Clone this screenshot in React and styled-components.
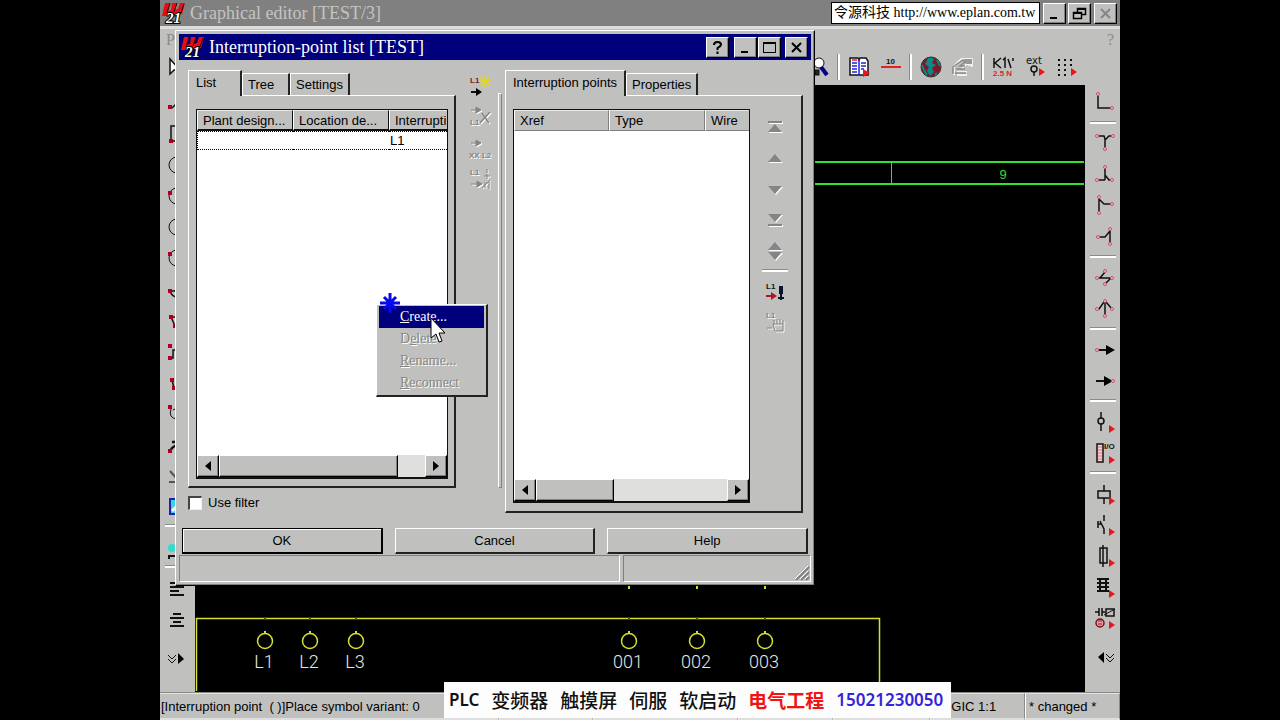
import React, { useState } from 'react'
import styled, { createGlobalStyle, css } from 'styled-components'

const face = '#c0c1bf'
const sans = '"Liberation Sans", Arial, sans-serif'
const serif = '"Liberation Serif", "Noto Sans CJK TC", serif'

const raised = css`
  border: 1px solid;
  border-color: #fff #000 #000 #fff;
  box-shadow: inset -1px -1px 0 #808080;
`

/* ---------- icons ---------- */

const Node = ({ x, y }) => (
  <circle cx={x} cy={y} r="1.5" fill="#f0c0c8" stroke="#c8506a" />
)
const Dot = ({ x, y }) => <rect x={x - 2} y={y - 2} width="4" height="4" fill="#a8001c" stroke="none" />
const Flag = ({ y = 15 }) => <path d={`M18 ${y}l6 4l-6 4z`} fill="#e8141e" stroke="none" />

function Icon({ children, size = 24, ...rest }) {
  return (
    <svg width={size} height={size} viewBox="0 0 24 24" fill="none" stroke="#111" aria-hidden="true" {...rest}>
      {children}
    </svg>
  )
}

// disabled look: white copy one pixel down-right, grey on top
function Etched({ children }) {
  return (
    <Icon stroke="none">
      <g transform="translate(1 1)" fill="#fff" stroke="#fff">{children}</g>
      <g fill="#858585" stroke="#858585">{children}</g>
    </Icon>
  )
}

const Tiny = ({ x, y, children, fill }) => (
  <text x={x} y={y} fontSize="8" fontFamily="Liberation Sans" fontWeight="700" stroke="none" fill={fill}>{children}</text>
)

const AppLogo = () => (
  <svg width="25" height="24" viewBox="0 0 25 24" aria-hidden="true">
    <path d="M4 2h5l-2 8l3-1l1-7h5l-2 7l3-1l2-6h5l-3 11l-5 2l1-4l-5 3l-1-2l-5 3H1z" fill="#e80c12" />
    <path d="M9 2l-3 10M16 2l-3 9M23 3l-3 9" stroke="#300" strokeWidth="1" fill="none" />
    <text x="5" y="22" fontSize="15" fontWeight="700" fontStyle="italic" fontFamily="Liberation Serif"
      fill="#fff" stroke="#000" strokeWidth="2" paintOrder="stroke">21</text>
  </svg>
)

const drawTools = [
  <><path d="M6 17L14 9" strokeWidth="1.5" /><Dot x={4} y={16} /></>,
  <><path d="M5 19V4H20V19z" strokeWidth="1.5" /><Dot x={5} y={19} /></>,
  <circle cx="11" cy="12" r="8" />,
  <><circle cx="11" cy="12" r="8" /><Dot x={4} y={9} /></>,
  <circle cx="11" cy="12" r="8" />,
  <><circle cx="11" cy="12" r="8" /><Dot x={4} y={8} /></>,
  <><path d="M4 14H20M4 14Q6 21 14 20" strokeWidth="1.5" /><Dot x={4} y={14} /></>,
  <><path d="M5 9L9 18M5 9H14" strokeWidth="1.5" /><Dot x={5} y={9} /><Dot x={9} y={18} /></>,
  <><path d="M4 19H7V11H12" strokeWidth="1.5" /><Dot x={4} y={7} /><Dot x={4} y={19} /></>,
  <><path d="M6 10L8 18" strokeWidth="1.5" /><Dot x={6} y={10} /><Dot x={8} y={18} /></>,
  <><path d="M5 8Q2 17 11 18" /><path d="M7 9Q9 7 13 8" /><Dot x={4} y={6} /></>,
  <><path d="M4 19Q8 12 12 15M6 10H14" strokeWidth="2.5" /><Dot x={4} y={19} /></>,
  <path d="M3 19H12M4 8L12 17" stroke="#555" strokeWidth="2" />,
  <><rect x="4" y="5" width="16" height="15" fill="#30d8e0" stroke="#2020b0" strokeWidth="2" /><path d="M6 17L15 8" stroke="#fff" strokeWidth="3" /></>,
  null,
  <><circle cx="6" cy="13" r="4" fill="#30dcd0" stroke="none" /><path d="M3 24V21H18" strokeWidth="2" /></>,
  null,
  <path d="M4 7H14M4 11H18M4 15H13M4 19H18" strokeWidth="2" />,
  <path d="M7 7H15M4 11H18M7 15H15M4 19H18" strokeWidth="2" />,
]

const symbolTools = [
  <><path d="M7 4V17H20" strokeWidth="1.5" /><Node x={7} y={3} /><Node x={21} y={17} /></>,
  null,
  <><path d="M6 4H13L14 7V16M14 8L18 4H21" strokeWidth="1.5" /><Node x={6} y={4} /><Node x={22} y={4} /><Node x={14} y={17} /></>,
  <><path d="M14 4V17M6 17H14M14 12L18 17H21" strokeWidth="1.5" /><Node x={14} y={4} /><Node x={6} y={17} /><Node x={21} y={17} /></>,
  <><path d="M8 3V18M8 5L13 10H21" strokeWidth="1.5" /><Node x={8} y={3} /><Node x={21} y={10} /><Node x={8} y={19} /></>,
  <><path d="M19 4V19M7 12H14L19 6" strokeWidth="1.5" /><Node x={19} y={4} /><Node x={7} y={12} /><Node x={19} y={19} /></>,
  null,
  <><path d="M6 12H21M14 6L9 12M20 12L14 18" strokeWidth="1.5" /><Node x={14} y={5} /><Node x={6} y={12} /><Node x={21} y={12} /><Node x={14} y={18} /></>,
  <><path d="M6 12H8L13 5M15 5L21 12M14 5V19" strokeWidth="1.5" /><Node x={14} y={4} /><Node x={6} y={12} /><Node x={21} y={12} /><Node x={14} y={19} /></>,
  null,
  <><path d="M7 12H16" strokeWidth="2" /><path d="M15 7L24 12L15 17z" fill="#000" stroke="none" /><Node x={6} y={12} /></>,
  <><path d="M5 12H14" strokeWidth="2" /><path d="M13 7L22 12L13 17z" fill="#000" stroke="none" /><Node x={22} y={12} /></>,
  null,
  <><path d="M10 2V21" strokeWidth="1.5" /><circle cx="10" cy="11" r="3" fill={face} strokeWidth="1.5" /><Flag /></>,
  <><rect x="6" y="3" width="6" height="18" fill="#f8d0d8" strokeWidth="1.5" /><path d="M7 6h4M7 9h4M7 12h4M7 15h4M7 18h4" stroke="#e07080" /><Tiny x={13} y={8} fill="#111">I/O</Tiny><Flag /></>,
  null,
  <><path d="M13 3V9M13 16V22" strokeWidth="1.5" /><rect x="7" y="9" width="12" height="7" strokeWidth="1.5" /><Flag /></>,
  <><path d="M13 2V8M13 21V16L9 8M7 8V15M7 11H11" strokeWidth="1.5" /><Flag /></>,
  <><path d="M12 1V23" strokeWidth="1.5" /><rect x="9" y="4" width="7" height="15" strokeWidth="1.5" /><Flag /></>,
  <><path d="M6 4H18M6 16H18" strokeWidth="2" /><path d="M6 8H18M6 12H18M9 4V16M15 4V16" strokeWidth="2" /><Flag /></>,
  <><path d="M4 6H8M8 2V10M11 2V10M11 6H14" strokeWidth="1.5" /><rect x="15" y="3" width="8" height="7" strokeWidth="1.5" /><path d="M13 9L24 3" /><circle cx="9" cy="17" r="4" stroke="#701020" strokeWidth="1.5" fill="#e8a0a8" /><path d="M7 15h4M7 18h4" stroke="#a01020" /><Flag /></>,
]

const topTools = [
  { name: 'Zoom', art: <><circle cx="12" cy="8" r="5" fill="#fff" /><path d="M14 12L20 20" stroke="#000080" strokeWidth="4" /><rect x="8" y="15" width="4" height="5" fill="#222" /></> },
  null,
  { name: 'Report', art: <><path d="M3 3H11L12 5L13 3H19L21 6V20H3z" fill="#fff" stroke="#111" strokeWidth="1.5" /><path d="M5 8H10M5 11H10M5 14H10M5 17H10M14 8H19M14 11H19M14 14H17" stroke="#2020e0" strokeWidth="1.5" /><path d="M12 4V20" stroke="#2020e0" strokeWidth="1.5" /><path d="M5 5H10" stroke="#e02020" strokeWidth="1.5" /><path d="M16 14l7 4l-7 4z" fill="#e8141e" stroke="none" /></> },
  { name: 'Wire number', art: <><Tiny x={7} y={9} fill="#111">10</Tiny><path d="M2 12H22" stroke="#e82018" strokeWidth="2" /></> },
  null,
  { name: 'Web', art: <><circle cx="12" cy="12" r="10" fill="#801828" stroke="#333" /><path d="M9 3Q13 2 15 4L13 8L17 10L13 13L15 17L11 21L8 16L10 12L6 9z" fill="#0c8888" stroke="none" /><path d="M3 10L5 15L8 20M18 5L21 11M18 18L16 20" stroke="#0c8888" strokeWidth="2" /></> },
  { name: 'Properties', art: <><path d="M3 20V11L10 4H21V11L16 9L10 14M6 17H16M6 20H16" stroke="#fff" strokeWidth="1.5" /><path d="M13 4H21V9H15z" fill="#999" stroke="none" /><path d="M2 19V12L6 9L12 5L14 7L9 11H14M5 14H14M4 18H15" stroke="#888" strokeWidth="1.5" /></> },
  null,
  { name: 'Device', art: <><path d="M3 3V13M10 3L4 8L10 13M12 5L14 3V13M17 4L20 13M22 3V6" strokeWidth="1.5" /><Tiny x={2} y={21} fill="#e82018">2.5 N</Tiny></> },
  { name: 'External', art: <><text x="3" y="9" fontSize="10" fontFamily="DejaVu Sans" stroke="none" fill="#111">ext</text><circle cx="11" cy="14" r="3" strokeWidth="1.5" /><path d="M11 17V21" strokeWidth="1.5" /><path d="M16 13l6 4l-6 4z" fill="#e8141e" stroke="none" /></> },
  { name: 'Grid', art: <><path d="M3 5H19M3 10H19M3 15H14M3 20H14" strokeWidth="2" strokeDasharray="2 4" /><path d="M16 13l6 4l-6 4z" fill="#e8141e" stroke="none" /></> },
]

const pointTools = [
  { name: 'Create', art: <Icon><Tiny x={2} y={9} fill="#801818">L1</Tiny><path d="M11 7H23M17 1V14M12 3L22 12M22 3L12 12" stroke="#e0d820" strokeWidth="1.5" /><path d="M3 18H10" strokeWidth="2" /><path d="M8 14l6 4l-6 4z" fill="#000" stroke="none" /></Icon> },
  { name: 'Delete', art: <Etched><path d="M3 5H9M8 2l5 3l-5 3z" /><path d="M12 18L22 7M14 8L21 18" fill="none" strokeWidth="1.5" /><Tiny x={2} y={20}>L1</Tiny></Etched> },
  { name: 'Rename', art: <Etched><path d="M3 7H9M8 4l5 3l-5 3z" /><Tiny x={1} y={22}>XX L2</Tiny></Etched> },
  { name: 'Reconnect', art: <Etched><Tiny x={2} y={8}>L1</Tiny><path d="M3 17H9M9 14l5 3l-5 3z" /><path d="M19 2V6M16 9h6M19 7V12M14 21L22 13M17 21V15M21 22V15" fill="none" /></Etched> },
]

const sortTools = [
  { name: 'To top', art: <Etched><path d="M5 6H19V8H5zM12 9L19 17H5z" stroke="none" /></Etched> },
  { name: 'Up', art: <Etched><path d="M12 8L19 16H5z" stroke="none" /></Etched> },
  { name: 'Down', art: <Etched><path d="M12 17L19 9H5z" stroke="none" /></Etched> },
  { name: 'To bottom', art: <Etched><path d="M12 14L19 6H5zM5 16H19V18H5z" stroke="none" /></Etched> },
  { name: 'Swap', art: <Etched><path d="M12 3L19 11H5zM12 21L19 13H5z" stroke="none" /></Etched> },
  null,
  { name: 'Go to', art: <Icon><Tiny x={3} y={9} fill="#111">L1</Tiny><path d="M3 16H10" stroke="#b01828" strokeWidth="2" /><path d="M8 12l6 4l-6 4z" fill="#b01828" stroke="none" /><path d="M18 6V14" stroke="#0a1430" strokeWidth="4" /><path d="M18 14V20M15 18H21" stroke="#0a1430" strokeWidth="2" /></Icon> },
  { name: 'Grab', art: <Etched><Tiny x={3} y={7}>L1</Tiny><path d="M4 17H9M10 13H20V20H12zM11 9V13M14 8V13M17 8V13M20 9V13" fill="none" /></Etched> },
]

/* ---------- styled parts ---------- */

const GlobalStyle = createGlobalStyle`
  * { box-sizing: border-box; }
  body { margin: 0; background: #000; font: 13px/16px ${sans}; color: #000; }
  button { font: inherit; color: inherit; padding: 0; margin: 0; border: 0; background: none; }
`

const Frame = styled.div`
  position: relative;
  width: 75%;
  min-height: 100vh;
  margin: 0 auto;
  display: flex;
  flex-direction: column;
  background: ${face};
`

const MainTitle = styled.header`
  height: 26px;
  display: flex;
  align-items: center;
  padding: 0 3px 0 1px;
  background: #808080;
  color: #c4c4c0;
`

const TitleText = styled.h1`
  flex: 1;
  margin: 0 0 0 4px;
  font: 18px/24px ${serif};
  white-space: nowrap;
`

const Address = styled.div`
  height: 22px;
  padding: 0 2px;
  min-width: 209px;
  margin-right: 2px;
  border: 1px solid #000;
  background: #fff;
  color: #000;
  font: 14px/19px ${serif};
  white-space: nowrap;
`

const CaptionButton = styled.button`
  ${raised}
  width: 23px;
  height: 21px;
  margin-left: ${p => p.$gap || 1}px;
  display: flex;
  align-items: center;
  justify-content: center;
  background: ${face};
  color: ${p => (p.disabled ? '#858585' : '#000')};
`

const MenuBar = styled.nav`
  height: 24px;
  padding: 0 6px;
  display: flex;
  justify-content: space-between;
  border-top: 3px solid #dcdcda;
  color: #8c8c8a;
  font: 16px/22px ${serif};
`

const Toolbar = styled.div`
  height: 35px;
  display: flex;
  justify-content: flex-end;
  padding: 1px 37px 0 0;
`

const ToolButton = styled.button`
  width: 32px;
  height: 31px;
  display: flex;
  align-items: center;
  justify-content: center;
`

const PointerTool = styled(ToolButton)`
  margin-right: auto;
`

const ToolSep = styled.div`
  width: 3px;
  height: 26px;
  margin: 3px 3px 0 2px;
  border-left: 1px solid #888;
  border-right: 2px solid #fff;
`

const Body = styled.div`
  flex: 1;
  display: grid;
  grid-template-columns: 35px 1fr 35px;
`

const Palette = styled.aside`
  display: flex;
  flex-direction: column;
  align-items: center;
  padding: 2px 0 18px;
`

const PaletteEnd = styled(ToolButton)`
  margin-top: auto;
`

const PaletteSep = styled.hr`
  width: 26px;
  height: 3px;
  margin: 3px 0 4px;
  border: 0;
  border-top: 1px solid #8c8c8c;
  border-bottom: 2px solid #fff;
`

const Canvas = styled.main`
  background: #000;
  overflow: hidden;

  svg {
    display: block;
    width: 100%;
    height: 100%;
  }
`

const StatusBar = styled.footer`
  height: 28px;
  display: grid;
  grid-template-columns: 339fr 94fr 145fr 95fr 97fr 95fr 95fr;
  border-top: 1px solid #888;
`

const StatusCell = styled.div`
  padding: 5px 1px 0 ${p => p.$pad || 1}px;
  border-left: ${p => (p.$pad ? 1 : 0)}px solid #fff;
  border-right: 1px solid #8a8a8a;
  border-top: 1px solid #e4e4e4;
  border-bottom: 2px solid #dedede;
  white-space: pre;
  overflow: hidden;
`

const Dialog = styled.section`
  position: absolute;
  left: 15px;
  top: 30px;
  width: calc(100% * 2 / 3);
  padding: 3px;
  background: ${face};
  border: 1px solid;
  border-color: #fff #000 #000 #fff;
  box-shadow: inset -1px -1px 0 #808080;
`

const DialogTitle = styled.div`
  height: 26px;
  display: flex;
  align-items: center;
  padding: 0 3px 0 1px;
  background: #00007c;
  color: #fff;
`

const Panes = styled.div`
  display: grid;
  grid-template-columns: 268fr 49fr 298fr;
  padding: 10px 8px 0 9px;
`

const Pane = styled.div`
  display: flex;
  flex-direction: column;
  min-width: 0;
`

const TabRow = styled.div`
  height: 25px;
  display: flex;
  align-items: flex-end;
`

const Tab = styled.button`
  position: relative;
  height: ${p => (p['aria-selected'] ? 26 : 22)}px;
  min-width: ${p => (p['aria-selected'] ? 54 : 48)}px;
  padding: ${p => (p['aria-selected'] ? '0 7px 2px' : '0 5px')};
  margin-bottom: ${p => (p['aria-selected'] ? -1 : 0)}px;
  z-index: ${p => (p['aria-selected'] ? 1 : 0)};
  background: ${face};
  border: solid;
  border-width: 1px 2px 0 1px;
  border-color: #fff #222 #fff #fff;
  text-align: left;
  white-space: nowrap;
`

const Panel = styled.div`
  flex: 1;
  display: flex;
  padding: 13px ${p => p.$right}px ${p => p.$bottom}px 7px;
  border: solid;
  border-width: 1px 2px 2px 1px;
  border-color: #fff #222 #222 #fff;
`

const ListBox = styled.div`
  flex: 1;
  min-width: 0;
  height: ${p => p.$tall}px;
  display: flex;
  flex-direction: column;
  background: #fff;
  border: solid #111;
  border-width: 1px 1px 2px;
`

const Grid = styled.table`
  width: 100%;
  table-layout: fixed;
  border-collapse: separate;
  border-spacing: 0;

  th, td {
    overflow: hidden;
    white-space: nowrap;
    font-weight: 400;
    text-align: left;
  }
  th {
    height: 21px;
    padding: 1px 0 0 5px;
    background: ${face};
    border-top: 1px solid #e8e8e8;
    border-left: 1px solid #fff;
    border-right: 1px solid ${p => (p.$dark ? '#111' : '#808080')};
    border-bottom: ${p => (p.$dark ? '2px solid #111' : '1px solid #808080')};
  }
  th:last-child { border-right: 0; }
  td {
    height: 19px;
    padding: 0 0 0 1px;
    border-top: 1px dotted #000;
    border-bottom: 1px dotted #000;
  }
  td:first-child { border-left: 1px dotted #000; }
`

const ScrollBar = styled.div`
  margin-top: auto;
  height: 22px;
  display: flex;
  background: #dfe0de;
`

const ScrollArrow = styled.button`
  ${raised}
  width: 22px;
  display: flex;
  align-items: center;
  justify-content: center;
  background: ${face};
`

const ScrollTrack = styled.div`
  flex: 1;
`

const ScrollThumb = styled.div`
  ${raised}
  width: ${p => p.$size}%;
  height: 100%;
  background: ${face};
`

const FilterLabel = styled.label`
  height: 25px;
  padding-top: 4px;
  display: flex;
  align-items: center;
  gap: 6px;

  input {
    appearance: none;
    width: 14px;
    height: 14px;
    margin: 0;
    background: #fff;
    border: solid;
    border-width: 2px 1px 1px 2px;
    border-color: #444 #eee #eee #444;
  }
`

const Middle = styled.div`
  display: flex;
  justify-content: space-between;
  padding: 0 3px 0 8px;
`

const VLine = styled.div`
  width: 4px;
  margin: 23px 0 25px;
  border: 1px solid;
  border-color: #fff #858585 #858585 #fff;
`

const SideTools = styled.div`
  width: ${p => p.$width}px;
  padding-top: ${p => p.$top || 0}px;
  display: flex;
  flex-direction: column;
  align-items: center;
`

const ButtonRow = styled.div`
  display: grid;
  grid-template-columns: repeat(3, 1fr);
  gap: 12px;
  padding: 15px 3px 0;
`

const PushButton = styled.button`
  height: 26px;
  background: ${face};
  border: solid;
  border-width: 1px 2px 2px 1px;
  border-color: ${p => (p.$primary ? '#000' : '#fff #222 #222 #fff')};
  box-shadow: inset 1px 1px 0 ${p => (p.$primary ? '#fff' : 'transparent')};
`

const DialogStatus = styled.div`
  display: grid;
  grid-template-columns: 441fr 188fr;
  gap: 3px;
  margin-top: 1px;
`

const DialogCell = styled.div`
  height: 27px;
  display: flex;
  align-items: flex-end;
  justify-content: flex-end;
  border: 1px solid;
  border-color: #808080 #fff #fff #808080;
`

const ContextMenu = styled.div`
  position: absolute;
  left: 216px;
  top: 304px;
  width: 112px;
  padding: 1px 2px;
  display: flex;
  flex-direction: column;
  background: ${face};
  border: solid;
  border-width: 1px 2px 2px 1px;
  border-color: #fff #222 #222 #fff;
`

const MenuItem = styled.button`
  height: 22px;
  padding-left: 21px;
  text-align: left;
  font: 14px/22px ${serif};
  color: #fff;
  background: #00007c;

  &:disabled {
    color: #868686;
    background: none;
    text-shadow: 1px 1px 0 #fff;
  }
`

const Marker = styled.svg`
  position: absolute;
  left: 220px;
  top: 293px;
`

const Pointer = styled.svg`
  position: absolute;
  left: 270px;
  top: 317px;
`

const Banner = styled.div`
  position: absolute;
  left: 284px;
  bottom: 2px;
  height: 36px;
  padding: 0 8px 0 5px;
  display: flex;
  align-items: center;
  gap: 12px;
  background: #fdfdfd;
  color: #111;
  font: 600 17px/34px "Noto Sans", sans-serif;
  white-space: nowrap;
`

const Han = styled.span`
  font-family: "Noto Sans CJK SC", sans-serif;
  font-size: 19px;
  font-weight: ${p => (p.$hot ? 700 : 500)};
  color: ${p => (p.$hot ? '#f01414' : '#111')};
`

const Phone = styled.span`
  color: #3326d8;
`

/* ---------- components ---------- */

const Glyph = ({ kind }) => (
  <svg width="15" height="15" viewBox="0 0 15 15" fill="none" stroke="currentColor" aria-hidden="true">
    {kind === 'min' && <path d="M3 12H10" strokeWidth="2" />}
    {kind === 'max' && <><rect x="1.5" y="2.5" width="12" height="10" /><path d="M1 3H14" strokeWidth="2" /></>}
    {kind === 'restore' && <><path d="M5.5 6V2.5H13.5V8.5H10" strokeWidth="1.5" /><path d="M5 3H14M1 7H10" strokeWidth="2" /><rect x="1.5" y="6.5" width="8" height="6" strokeWidth="1.5" /></>}
    {kind === 'close' && <path d="M3 3L12 12M12 3L3 12" strokeWidth="2" />}
    {kind === 'help' && <path d="M4 5Q4 2 7.500 2Q11 2 11 4.500Q11 6 7.500 8V10M7.500 11.500V14" strokeWidth="2" />}
  </svg>
)

function Scroller({ size }) {
  return (
    <ScrollBar>
      <ScrollArrow aria-label="Scroll left">
        <svg width="6" height="10" aria-hidden="true"><path d="M6 0V10L0 5z" /></svg>
      </ScrollArrow>
      <ScrollTrack><ScrollThumb $size={size} /></ScrollTrack>
      <ScrollArrow aria-label="Scroll right">
        <svg width="6" height="10" aria-hidden="true"><path d="M0 0V10L6 5z" /></svg>
      </ScrollArrow>
    </ScrollBar>
  )
}

function Tabs({ names }) {
  const [active, setActive] = useState(names[0])
  return (
    <TabRow role="tablist">
      {names.map(name => (
        <Tab key={name} role="tab" aria-selected={name === active} onClick={() => setActive(name)}>{name}</Tab>
      ))}
    </TabRow>
  )
}

const terminals = [
  { x: 70, label: 'L1' },
  { x: 115, label: 'L2' },
  { x: 161, label: 'L3' },
  { x: 434, label: '001', wired: true },
  { x: 502, label: '002', wired: true },
  { x: 570, label: '003', wired: true },
]

function Schematic() {
  return (
    <svg>
      <g stroke="#2ee22e" strokeWidth="2">
        <path d="M0 77H889M0 99H889" />
        <path d="M696.5 77V99" strokeWidth="1" />
      </g>
      <text x="808" y="94" textAnchor="middle" fontFamily="Liberation Sans" fontSize="13" fill="#2ee22e">9</text>
      <path d="M1.5 606V533.5H684.5V607" fill="none" stroke="#d8e02c" strokeWidth="1.5" />
      {terminals.map(t => (
        <g key={t.label}>
          {t.wired && <path d={`M${t.x} 501v3`} stroke="#d8e02c" strokeWidth="2" />}
          <path d={`M${t.x} 532v3`} stroke="#444" strokeWidth="2" />
          <path d={`M${t.x} 546v3`} stroke="#d8e02c" strokeWidth="2" />
          <circle cx={t.x} cy="556" r="7.5" fill="none" stroke="#d8e02c" strokeWidth="1.5" />
          <text x={t.x - 1} y="583" textAnchor="middle" fontFamily="Roboto" fontWeight="300" fontSize="18" fill="#e8e8e8">{t.label}</text>
        </g>
      ))}
    </svg>
  )
}

function ListDialog() {
  return (
    <Dialog role="dialog" aria-label="Interruption-point list">
      <DialogTitle>
        <AppLogo />
        <TitleText as="h2">Interruption-point list [TEST]</TitleText>
        <CaptionButton aria-label="Help"><Glyph kind="help" /></CaptionButton>
        <CaptionButton $gap={5} aria-label="Minimize"><Glyph kind="min" /></CaptionButton>
        <CaptionButton aria-label="Maximize"><Glyph kind="max" /></CaptionButton>
        <CaptionButton $gap={4} aria-label="Close"><Glyph kind="close" /></CaptionButton>
      </DialogTitle>

      <Panes>
        <Pane>
          <Tabs names={['List', 'Tree', 'Settings']} />
          <Panel $right={6} $bottom={7}>
            <ListBox>
              <Grid $dark>
                <colgroup><col width="96" /><col width="96" /><col /></colgroup>
                <thead>
                  <tr><th>Plant design...</th><th>Location de...</th><th>Interrupti</th></tr>
                </thead>
                <tbody>
                  <tr><td></td><td></td><td>L1</td></tr>
                </tbody>
              </Grid>
              <Scroller size={87} />
            </ListBox>
          </Panel>
          <FilterLabel><input type="checkbox" />Use filter</FilterLabel>
        </Pane>

        <Middle>
          <SideTools $width={32}>
            {pointTools.map(t => <ToolButton key={t.name} aria-label={t.name}>{t.art}</ToolButton>)}
          </SideTools>
          <VLine />
        </Middle>

        <Pane>
          <Tabs names={['Interruption points', 'Properties']} />
          <Panel $right={0} $bottom={8}>
            <ListBox $tall={394}>
              <Grid>
                <colgroup><col width="95" /><col width="96" /><col /></colgroup>
                <thead>
                  <tr><th>Xref</th><th>Type</th><th>Wire</th></tr>
                </thead>
              </Grid>
              <Scroller size={41} />
            </ListBox>
            <SideTools $width={51} $top={2}>
              {sortTools.map((t, i) => t
                ? <ToolButton key={i} aria-label={t.name}>{t.art}</ToolButton>
                : <PaletteSep key={i} />)}
            </SideTools>
          </Panel>
        </Pane>
      </Panes>

      <ButtonRow>
        <PushButton $primary>OK</PushButton>
        <PushButton>Cancel</PushButton>
        <PushButton>Help</PushButton>
      </ButtonRow>

      <DialogStatus>
        <DialogCell />
        <DialogCell>
          <svg width="16" height="16" aria-hidden="true">
            <path d="M2 15L15 2M7 15L15 7M12 15L15 12" stroke="#808080" strokeWidth="2" />
            <path d="M1 14L14 1M6 14L14 6M11 14L14 11" stroke="#fff" />
          </svg>
        </DialogCell>
      </DialogStatus>
    </Dialog>
  )
}

export default function App() {
  return (
    <Frame>
      <GlobalStyle />
      <MainTitle>
        <AppLogo />
        <TitleText>Graphical editor [TEST/3]</TitleText>
        <Address>令源科技 http://www.eplan.com.tw</Address>
        <CaptionButton aria-label="Minimize window"><Glyph kind="min" /></CaptionButton>
        <CaptionButton $gap={2} aria-label="Restore window"><Glyph kind="restore" /></CaptionButton>
        <CaptionButton $gap={3} disabled aria-label="Close window"><Glyph kind="close" /></CaptionButton>
      </MainTitle>
      <MenuBar><span>P</span><span>?</span></MenuBar>
      <Toolbar>
        <PointerTool aria-label="Select"><Icon><path d="M6 4V19L10 15H16z" fill="#fff" strokeWidth="1.5" /></Icon></PointerTool>
        {topTools.map((t, i) => t
          ? <ToolButton key={i} aria-label={t.name}><Icon>{t.art}</Icon></ToolButton>
          : <ToolSep key={i} />)}
      </Toolbar>

      <Body>
        <Palette>
          {drawTools.map((art, i) => art
            ? <ToolButton key={i} aria-label={`Draw ${i + 1}`}><Icon>{art}</Icon></ToolButton>
            : <PaletteSep key={i} />)}
          <PaletteEnd aria-label="More drawing tools">
            <Icon><path d="M2 8l4 4l4-4M2 12l4 4l4-4" /><path d="M12 6V17L18 12z" fill="#000" stroke="none" /></Icon>
          </PaletteEnd>
        </Palette>
        <Canvas><Schematic /></Canvas>
        <Palette>
          {symbolTools.map((art, i) => art
            ? <ToolButton key={i} aria-label={`Symbol ${i + 1}`}><Icon>{art}</Icon></ToolButton>
            : <PaletteSep key={i} />)}
          <PaletteEnd aria-label="More symbols">
            <Icon><path d="M15 7l4 4l4-4M15 11l4 4l4-4" /><path d="M13 5V16L7 10z" fill="#000" stroke="none" /></Icon>
          </PaletteEnd>
        </Palette>
      </Body>

      <StatusBar>
        <StatusCell>{'[Interruption point  ( )]Place symbol variant: 0'}</StatusCell>
        <StatusCell $pad={3} />
        <StatusCell $pad={3} />
        <StatusCell $pad={3} />
        <StatusCell $pad={3} />
        <StatusCell $pad={3}>LOGIC 1:1</StatusCell>
        <StatusCell $pad={3}>* changed *</StatusCell>
      </StatusBar>

      <ListDialog />

      <ContextMenu role="menu">
        <MenuItem role="menuitem"><u>C</u>reate...</MenuItem>
        <MenuItem role="menuitem" disabled>D<u>e</u>lete</MenuItem>
        <MenuItem role="menuitem" disabled><u>R</u>ename...</MenuItem>
        <MenuItem role="menuitem" disabled><u>R</u>econnect</MenuItem>
      </ContextMenu>
      <Marker width="20" height="20" aria-hidden="true">
        <path d="M10 0V20M0 10H20M4 4L16 16M16 4L4 16" stroke="#0808f0" strokeWidth="3" />
      </Marker>
      <Pointer width="16" height="28" aria-hidden="true">
        <path d="M1 1V21L6 17L9 25L12 24L9 16H15z" fill="#fff" stroke="#000" />
      </Pointer>

      <Banner>
        <span>PLC</span>
        <Han>变频器</Han>
        <Han>触摸屏</Han>
        <Han>伺服</Han>
        <Han>软启动</Han>
        <Han $hot>电气工程</Han>
        <Phone>15021230050</Phone>
      </Banner>
    </Frame>
  )
}
